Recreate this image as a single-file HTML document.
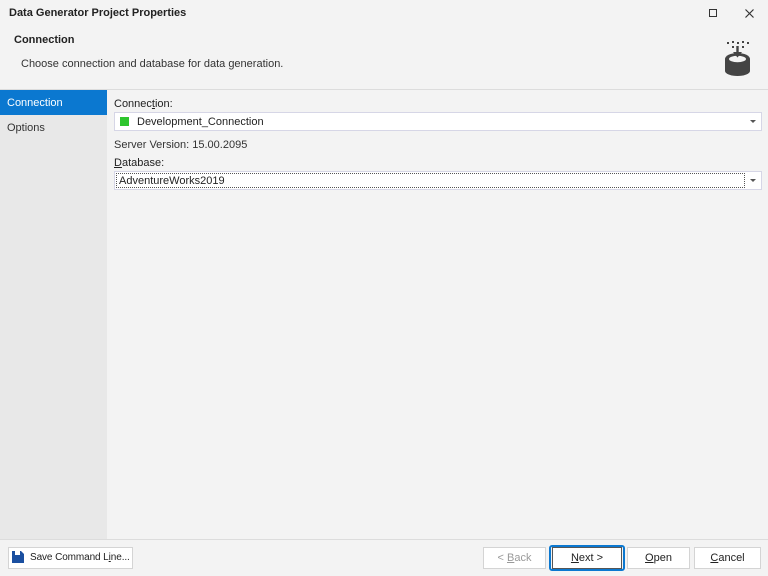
<!DOCTYPE html>
<html><head><style>
*{margin:0;padding:0;box-sizing:border-box}
body{width:768px;height:576px;background:#f3f3f3;font-family:"Liberation Sans",sans-serif;font-size:11px;color:#222;position:relative;overflow:hidden}
.a{position:absolute;white-space:nowrap}
.btn{position:absolute;top:547px;height:22px;border:1px solid #d4d4d4;background:#fff;text-align:center;line-height:20px;font-size:11px;color:#222;white-space:nowrap;overflow:hidden}
u{text-decoration:underline}
</style></head><body>
<div class="a" style="left:9px;top:7px;font-weight:bold;font-size:11px">Data Generator Project Properties</div>
<div class="a" style="left:709px;top:9px;width:8px;height:8px;border:1px solid #333"></div>
<svg class="a" style="left:745px;top:9px" width="9" height="9"><path d="M0.5 0.5L8.5 8.5M8.5 0.5L0.5 8.5" stroke="#333" stroke-width="1.2"/></svg>
<div class="a" style="left:14px;top:34px;font-weight:bold;font-size:11px">Connection</div>
<div class="a" style="left:21px;top:58px;font-size:11px;color:#333">Choose connection and database for data generation.</div>
<svg class="a" style="left:724px;top:38px" width="28" height="40">
<g fill="#444"><rect x="3" y="4" width="2" height="2"/><rect x="8" y="3" width="2" height="2"/><rect x="13" y="4" width="2" height="2"/><rect x="18" y="3" width="2" height="2"/><rect x="23" y="4" width="2" height="2"/><rect x="8" y="8" width="2" height="2"/><rect x="18" y="8" width="2" height="2"/>
<path d="M1 21A12.5 6 0 0 1 26 21V33A12.5 5 0 0 1 1 33Z"/></g>
<ellipse cx="13.5" cy="21" rx="8.5" ry="3.2" fill="#f3f3f3"/>
<rect x="12.3" y="8" width="2.4" height="9" fill="#444"/><path d="M9 14L13.5 19.5L18 14Z" fill="#444"/>
</svg>
<div class="a" style="left:0;top:89px;width:768px;height:1px;background:#dcdcdc"></div>
<div class="a" style="left:0;top:90px;width:107px;height:449px;background:#e8e8e8"></div>
<div class="a" style="left:0;top:90px;width:107px;height:25px;background:#0b78d0"></div>
<div class="a" style="left:7px;top:97px;color:#fff">Connection</div>
<div class="a" style="left:7px;top:122px;color:#333">Options</div>
<div class="a" style="left:114px;top:98px">Connec<u>t</u>ion:</div>
<div class="a" style="left:114px;top:112px;width:648px;height:19px;background:#fff;border:1px solid #d6d6e6"></div>
<div class="a" style="left:120px;top:117px;width:9px;height:9px;background:#2ec52e"></div>
<div class="a" style="left:137px;top:116px">Development_Connection</div>
<div class="a" style="left:750px;top:120px;border-left:3px solid transparent;border-right:3px solid transparent;border-top:3px solid #555"></div>
<div class="a" style="left:114px;top:139px;color:#333">Server Version: 15.00.2095</div>
<div class="a" style="left:114px;top:157px"><u>D</u>atabase:</div>
<div class="a" style="left:114px;top:171px;width:648px;height:19px;background:#fff;border:1px solid #d6d6e6"></div>
<div class="a" style="left:116px;top:173px;width:629px;height:15px;border:1px dotted #555"></div>
<div class="a" style="left:119px;top:175px">AdventureWorks2019</div>
<div class="a" style="left:750px;top:179px;border-left:3px solid transparent;border-right:3px solid transparent;border-top:3px solid #555"></div>
<div class="a" style="left:0;top:539px;width:768px;height:1px;background:#dcdcdc"></div>
<div class="btn" style="left:8px;width:125px;text-align:left;padding-left:21px;font-size:10px;letter-spacing:-0.1px">Save Command L<u>i</u>ne...</div>
<svg class="a" style="left:12px;top:551px" width="12" height="12"><path d="M0 0H9L12 3V12H0Z" fill="#1a4fa0"/><rect x="3" y="0" width="5" height="4" fill="#fff"/><rect x="2" y="7" width="8" height="5" fill="#1a4fa0"/></svg>
<div class="btn" style="left:483px;width:63px;color:#9a9a9a">&lt; <u>B</u>ack</div>
<div class="a" style="left:549px;top:545px;width:76px;height:26px;border:2px solid #0b78d0;border-radius:3px"></div>
<div class="btn" style="left:552px;width:70px;border-color:#555"><u>N</u>ext &gt;</div>
<div class="btn" style="left:627px;width:63px"><u>O</u>pen</div>
<div class="btn" style="left:694px;width:67px"><u>C</u>ancel</div>
</body></html>
